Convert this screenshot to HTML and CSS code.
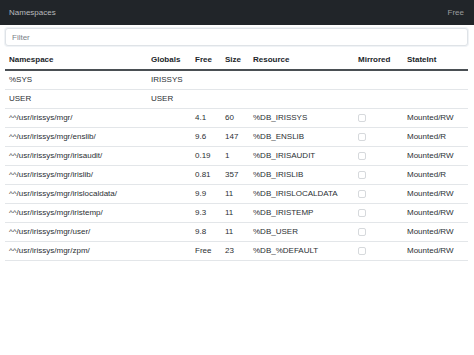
FILE: index.html
```html
<!DOCTYPE html>
<html>
<head>
<meta charset="utf-8">
<link rel="stylesheet" href="styles.css">
</head>
<body>
<nav class="navbar">
  <span class="brand">Namespaces</span>
  <span class="nav-link">Free</span>
</nav>
<main class="content">
  <input class="filter" type="text" placeholder="Filter">
  <table class="grid">
    <colgroup>
      <col class="c-ns"><col class="c-gl"><col class="c-free"><col class="c-size"><col class="c-res"><col class="c-mir"><col class="c-state">
    </colgroup>
    <thead>
      <tr><th>Namespace</th><th>Globals</th><th>Free</th><th>Size</th><th>Resource</th><th>Mirrored</th><th>StateInt</th></tr>
    </thead>
    <tbody>
      <tr><td>%SYS</td><td>IRISSYS</td><td></td><td></td><td></td><td></td><td></td></tr>
      <tr><td>USER</td><td>USER</td><td></td><td></td><td></td><td></td><td></td></tr>
      <tr><td>^^/usr/irissys/mgr/</td><td></td><td>4.1</td><td>60</td><td>%DB_IRISSYS</td><td><span class="check"></span></td><td>Mounted/RW</td></tr>
      <tr><td>^^/usr/irissys/mgr/enslib/</td><td></td><td>9.6</td><td>147</td><td>%DB_ENSLIB</td><td><span class="check"></span></td><td>Mounted/R</td></tr>
      <tr><td>^^/usr/irissys/mgr/irisaudit/</td><td></td><td>0.19</td><td>1</td><td>%DB_IRISAUDIT</td><td><span class="check"></span></td><td>Mounted/RW</td></tr>
      <tr><td>^^/usr/irissys/mgr/irislib/</td><td></td><td>0.81</td><td>357</td><td>%DB_IRISLIB</td><td><span class="check"></span></td><td>Mounted/R</td></tr>
      <tr><td>^^/usr/irissys/mgr/irislocaldata/</td><td></td><td>9.9</td><td>11</td><td>%DB_IRISLOCALDATA</td><td><span class="check"></span></td><td>Mounted/RW</td></tr>
      <tr><td>^^/usr/irissys/mgr/iristemp/</td><td></td><td>9.3</td><td>11</td><td>%DB_IRISTEMP</td><td><span class="check"></span></td><td>Mounted/RW</td></tr>
      <tr><td>^^/usr/irissys/mgr/user/</td><td></td><td>9.8</td><td>11</td><td>%DB_USER</td><td><span class="check"></span></td><td>Mounted/RW</td></tr>
      <tr><td>^^/usr/irissys/mgr/zpm/</td><td></td><td>Free</td><td>23</td><td>%DB_%DEFAULT</td><td><span class="check"></span></td><td>Mounted/RW</td></tr>
    </tbody>
  </table>
</main>
</body>
</html>
```

FILE: styles.css
```css
* { box-sizing: border-box; }
html, body { margin: 0; padding: 0; background: #fff; }
body {
  font-family: "Liberation Sans", Arial, sans-serif;
  font-size: 8px;
  color: #212529;
}
.navbar {
  height: 25px;
  background: #212529;
  display: flex;
  align-items: center;
  justify-content: space-between;
  padding: 0 10px 0 9px;
}
.brand { color: #b9bbbd; font-size: 8px; }
.nav-link { color: #9a9c9e; font-size: 8px; }
.content { padding: 3px 6px 0 5px; }
.filter {
  display: block;
  width: 100%;
  height: 18px;
  border: 1px solid #dfe3e7;
  border-radius: 3px;
  padding: 0 6px;
  font-family: inherit;
  font-size: 8px;
  color: #495057;
  outline: none;
  box-shadow: 0 0 0 1px #f0f3f6;
}
.filter::placeholder { color: #7b8187; }
.grid {
  width: 463px;
  margin-top: 4px;
  border-collapse: collapse;
  table-layout: fixed;
}
.c-ns { width: 142px; }
.c-gl { width: 44px; }
.c-free { width: 30px; }
.c-size { width: 28px; }
.c-res { width: 105px; }
.c-mir { width: 49px; }
.c-state { width: 65px; }
.grid th {
  text-align: left;
  font-weight: bold;
  height: 20px;
  padding: 0 4px;
  vertical-align: middle;
  border-bottom: 2px solid #4a4f54;
  color: #212529;
}
.grid td {
  height: 19px;
  padding: 0 4px;
  vertical-align: middle;
  border-bottom: 1px solid #e3e6e9;
  white-space: nowrap;
  color: #2b2f33;
}
.check {
  display: inline-block;
  width: 8px;
  height: 8px;
  border: 1px solid #d6d9dc;
  border-radius: 2px;
  vertical-align: middle;
}
```
